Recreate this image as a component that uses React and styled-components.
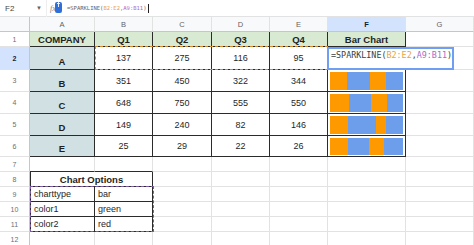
import React from 'react';
import styled, { createGlobalStyle } from 'styled-components';

const GlobalStyle = createGlobalStyle`
  html, body {
    margin: 0;
    padding: 0;
    background: #ffffff;
  }
  body {
    font-family: "Liberation Sans", Arial, sans-serif;
  }
`;

const COLS = '30px 65px 58px 59px 58px 58px 78px 68px';
const ROWS = '15px 15px 23px 22px 22px 22px 21px 15px 15px 15px 15px 15px 15px';

const GRID = '#e2e2e2';
const DARK = '#2b2b2b';

const Page = styled.div`
  position: relative;
  width: 474px;
  height: 245px;
  overflow: hidden;
  background: #fff;
`;

const FormulaBar = styled.div`
  height: 17px;
  box-sizing: border-box;
  border-bottom: 1px solid ${GRID};
  display: flex;
  align-items: center;
  font-size: 8px;
  color: #444746;
`;

const NameBox = styled.div`
  width: 46px;
  padding-left: 5px;
  box-sizing: border-box;
  display: flex;
  justify-content: space-between;
  align-items: center;
  padding-right: 4px;
`;

const Caret = styled.span`
  font-size: 6px;
  color: #5f6368;
`;

const Fx = styled.div`
  position: relative;
  width: 18px;
  height: 17px;
  display: flex;
  align-items: center;
  border-left: 1px solid #eee;
  margin-right: 2px;
`;

const FxText = styled.span`
  font-family: "Liberation Serif", serif;
  font-style: italic;
  font-size: 8px;
  color: #80868b;
  margin-left: 3px;
`;

const FxBadge = styled.div`
  position: absolute;
  left: 8px;
  top: 2px;
  width: 7px;
  height: 11px;
  border-radius: 2px;
  background: #2f6fdc;
  display: flex;
  align-items: flex-start;
  justify-content: center;
`;

const FormulaText = styled.span`
  font-family: "DejaVu Sans Mono", monospace;
  font-size: 5.5px;
  color: #5f6368;
`;

const Ref = styled.span`
  color: ${(p) => p.color};
`;

const Cursor = styled.span`
  display: inline-block;
  width: 1px;
  height: 9px;
  background: #222;
  vertical-align: middle;
  margin-left: 1px;
`;

const Grid = styled.div`
  display: grid;
  grid-template-columns: ${COLS};
  grid-template-rows: ${ROWS};
`;

const Cell = styled.div`
  box-sizing: border-box;
  display: flex;
  align-items: ${(p) => p.valign || 'center'};
  justify-content: ${(p) => p.align || 'center'};
  padding: ${(p) => (p.align === 'flex-start' ? '0 3px' : '0')};
  padding-bottom: ${(p) => (p.valign === 'flex-end' ? '2px' : '0')};
  grid-column: ${(p) => (p.span ? `span ${p.span}` : 'auto')};
  background: ${(p) => p.bg || '#fff'};
  border-right: 1px solid ${(p) => (p.dark || p.darkRight ? DARK : GRID)};
  border-bottom: 1px solid ${(p) => (p.dark || p.darkBottom ? DARK : GRID)};
  border-left: ${(p) => (p.darkLeft ? `1px solid ${DARK}` : 'none')};
  font-size: ${(p) => (p.bold ? '9.5px' : '9px')};
  font-weight: ${(p) => (p.bold ? 700 : 400)};
  color: #1f1f1f;
  white-space: nowrap;
  overflow: hidden;
`;

const Head = styled.div`
  box-sizing: border-box;
  display: flex;
  align-items: center;
  justify-content: center;
  background: ${(p) => (p.active ? '#d3e3fd' : '#f8f9fa')};
  border-right: 1px solid ${(p) => (p.corner ? '#c4c7c5' : '#e1e3e1')};
  border-bottom: 1px solid #c4c7c5;
  font-size: 7.5px;
  font-weight: ${(p) => (p.active ? 700 : 400)};
  color: ${(p) => (p.active ? '#0b1f44' : '#5f6368')};
`;

const RowNum = styled.div`
  box-sizing: border-box;
  display: flex;
  align-items: center;
  justify-content: center;
  background: ${(p) => (p.active ? '#d3e3fd' : '#fff')};
  border-right: 1px solid #c4c7c5;
  border-bottom: 1px solid ${GRID};
  font-size: 7px;
  font-weight: ${(p) => (p.active ? 700 : 400)};
  color: ${(p) => (p.active ? '#0b1f44' : '#6b6f73')};
`;

const ChartCell = styled.div`
  box-sizing: border-box;
  display: flex;
  padding: 2px 2px 1px 2px;
  background: #fff;
  border-right: 1px solid ${DARK};
  border-bottom: 1px solid ${DARK};
`;

const Bar = styled.div`
  flex: ${(p) => p.grow} 1 0;
  background: ${(p) => (p.alt ? '#6d9eeb' : '#ff9900')};
`;

const RangeBox = styled.div`
  position: absolute;
  pointer-events: none;
  box-sizing: border-box;
  left: ${(p) => p.x}px;
  top: ${(p) => p.y}px;
  width: ${(p) => p.w}px;
  height: ${(p) => p.h}px;
  border: 1px dashed ${(p) => p.color};
`;

const Editor = styled.div`
  position: absolute;
  left: 327px;
  top: 47px;
  width: 127px;
  height: 23px;
  box-sizing: border-box;
  border: 2px solid #6f9ef2;
  background: #fff;
  padding: 1px 0 0 2px;
  font-family: "DejaVu Sans Mono", monospace;
  font-size: 8.4px;
  color: #3c4043;
  white-space: nowrap;
`;

const companies = [
  { name: 'A', q: [137, 275, 116, 95] },
  { name: 'B', q: [351, 450, 322, 344] },
  { name: 'C', q: [648, 750, 555, 550] },
  { name: 'D', q: [149, 240, 82, 146] },
  { name: 'E', q: [25, 29, 22, 26] },
];

const options = [
  ['charttype', 'bar'],
  ['color1', 'green'],
  ['color2', 'red'],
];

const GREEN = '#d9ead3';
const BLUEGRAY = '#d0e0e3';

const App = () => {
  return (
    <Page>
      <GlobalStyle />
      <FormulaBar>
        <NameBox>
          <span>F2</span>
          <Caret>▼</Caret>
        </NameBox>
        <Fx>
          <FxText>fx</FxText>
          <FxBadge>
            <svg width="5" height="6" viewBox="0 0 5 6">
              <path d="M2.5 0.5 L2.5 5 M1 2 L2.5 0.5 L4 2" stroke="#fff" strokeWidth="0.9" fill="none" />
            </svg>
          </FxBadge>
        </Fx>
        <FormulaText>
          =SPARKLINE(<Ref color="#e8a33d">B2:E2</Ref>,<Ref color="#a86bc9">A9:B11</Ref>)
          <Cursor />
        </FormulaText>
      </FormulaBar>

      <Grid>
        <Head corner />
        {['A', 'B', 'C', 'D', 'E', 'F', 'G'].map((c) => (
          <Head key={c} active={c === 'F'}>
            {c}
          </Head>
        ))}

        <RowNum>1</RowNum>
        <Cell bg={GREEN} bold dark>COMPANY</Cell>
        {['Q1', 'Q2', 'Q3', 'Q4'].map((q) => (
          <Cell key={q} bg={GREEN} bold dark>
            {q}
          </Cell>
        ))}
        <Cell bg={GREEN} bold dark>Bar Chart</Cell>
        <Cell />

        {companies.map((co, i) => (
          <React.Fragment key={co.name}>
            <RowNum active={i === 0}>{i + 2}</RowNum>
            <Cell bg={BLUEGRAY} bold dark valign="flex-end">
              {co.name}
            </Cell>
            {co.q.map((v, j) => (
              <Cell key={j} dark>
                {v}
              </Cell>
            ))}
            {i === 0 ? (
              <Cell />
            ) : (
              <ChartCell>
                {co.q.map((v, j) => (
                  <Bar key={j} grow={v} alt={j % 2 === 1} />
                ))}
              </ChartCell>
            )}
            <Cell />
          </React.Fragment>
        ))}

        <RowNum>7</RowNum>
        <Cell darkBottom />
        <Cell darkBottom />
        <Cell />
        <Cell />
        <Cell />
        <Cell />
        <Cell />

        <RowNum>8</RowNum>
        <Cell span={2} bold dark darkLeft>
          Chart Options
        </Cell>
        <Cell />
        <Cell />
        <Cell />
        <Cell />
        <Cell />

        {options.map(([k, v], i) => (
          <React.Fragment key={k}>
            <RowNum>{i + 9}</RowNum>
            <Cell dark darkLeft align="flex-start">
              {k}
            </Cell>
            <Cell dark align="flex-start">
              {v}
            </Cell>
            <Cell />
            <Cell />
            <Cell />
            <Cell />
            <Cell />
          </React.Fragment>
        ))}

        <RowNum>12</RowNum>
        <Cell />
        <Cell />
        <Cell />
        <Cell />
        <Cell />
        <Cell />
        <Cell />
      </Grid>

      <RangeBox x={95} y={46} w={233} h={24} color="#d98a2b" />
      <RangeBox x={30} y={186} w={124} h={46} color="#7e5aa8" />

      <Editor>
        =SPARKLINE(<Ref color="#e8a33d">B2:E2</Ref>,<Ref color="#a86bc9">A9:B11</Ref>)
      </Editor>
    </Page>
  );
};

export default App;
